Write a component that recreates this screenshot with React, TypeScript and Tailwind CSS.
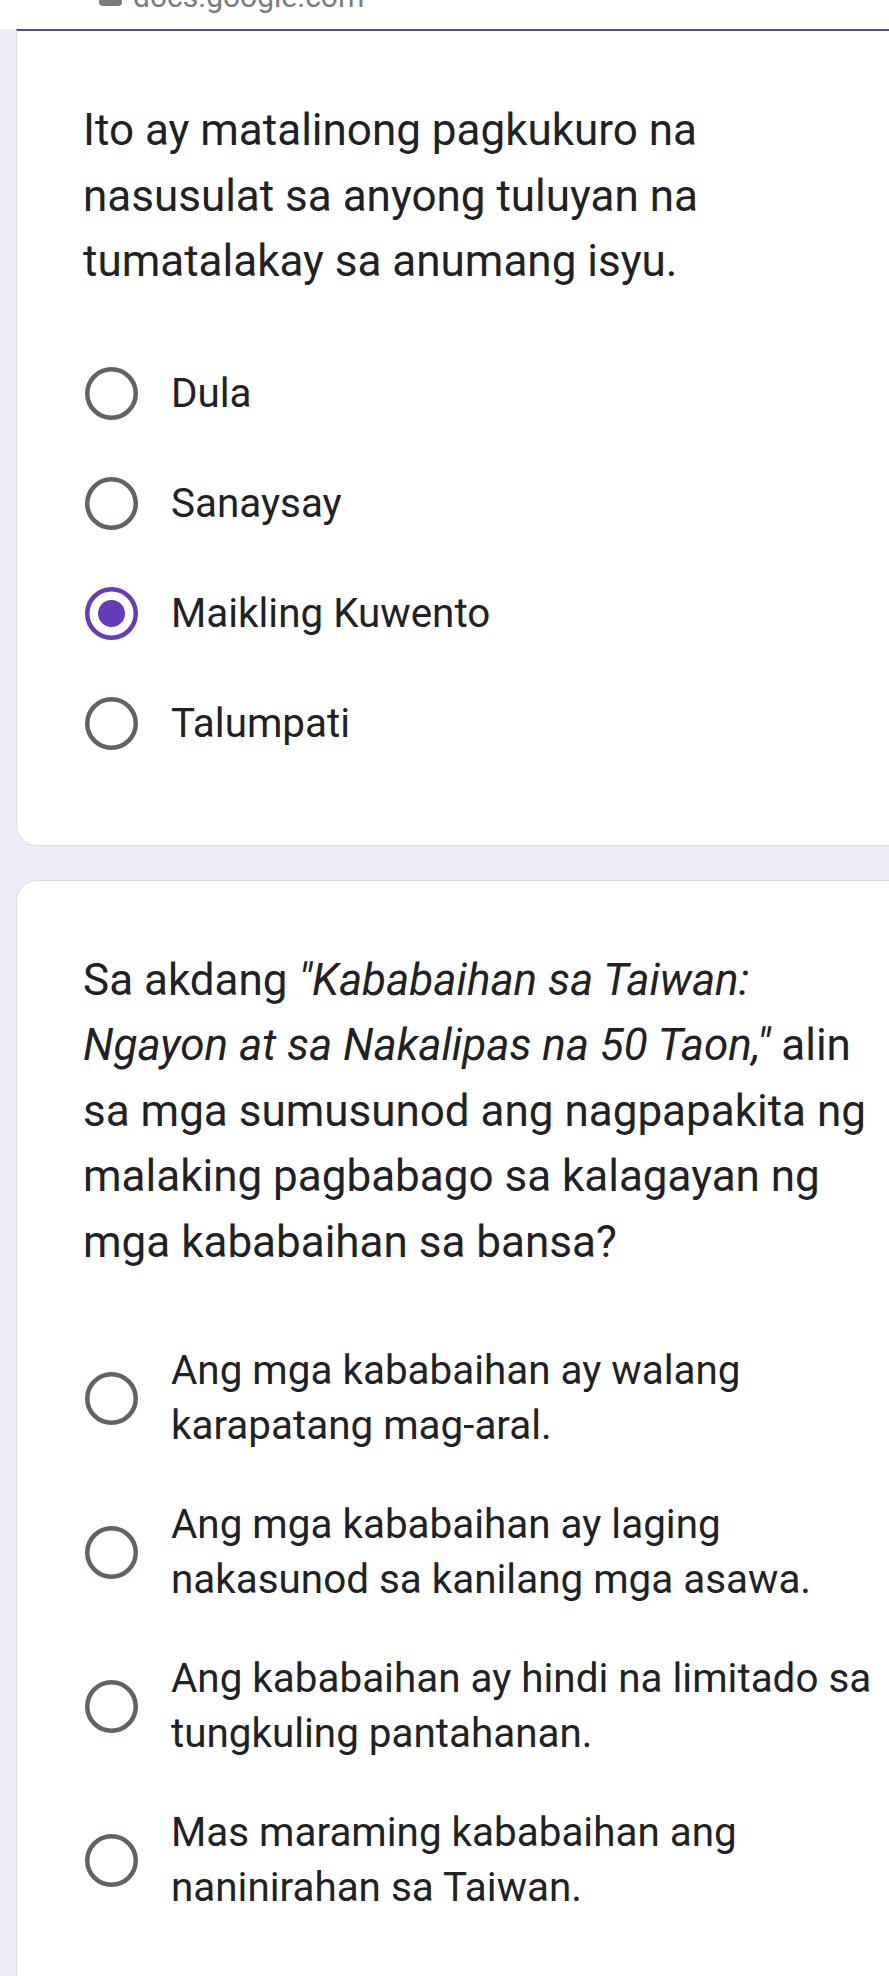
import React from "react";

const Radio = ({ checked = false }: { checked?: boolean }) => (
  <svg width="53" height="53" viewBox="0 0 53 53" className="shrink-0 ml-[2px]">
    <circle
      cx="26.5"
      cy="26.5"
      r="24.25"
      fill="none"
      stroke={checked ? "#673ab7" : "#5f6368"}
      strokeWidth="4.5"
    />
    {checked && <circle cx="26.5" cy="26.5" r="13.5" fill="#673ab7" />}
  </svg>
);

const SingleOption = ({ label, checked = false }: { label: string; checked?: boolean }) => (
  <div className="flex items-center h-[110px]">
    <Radio checked={checked} />
    <div className="ml-[33px] text-[40.4px] leading-[55px] text-[#202124] whitespace-nowrap">{label}</div>
  </div>
);

const DoubleOption = ({ lines }: { lines: [string, string] }) => (
  <div className="flex items-center h-[154px]">
    <Radio />
    <div className="ml-[33px] text-[40.4px] leading-[55px] text-[#202124] whitespace-nowrap">
      {lines[0]}
      <br />
      {lines[1]}
    </div>
  </div>
);

export default function App() {
  return (
    <div
      className="w-[889px] h-[1976px] overflow-hidden bg-[#f0ebf8]"
      style={{ fontFamily: "Roboto, 'Noto Sans', Arial, sans-serif" }}
    >
      {/* browser url strip (cut off at the top edge, as in the screenshot) */}
      <div className="h-[29px] bg-white overflow-hidden">
        <div className="flex items-end gap-[11px] pl-[99px] mt-[-18px] h-[30px]">
          <div className="w-[23px] h-[18px] rounded-[4px] bg-[#7b7b7b] mb-[6px]" />
          <div className="text-[30px] leading-[30px] text-[#7b7b7b]">docs.google.com</div>
        </div>
      </div>

      {/* card 1 */}
      <div className="ml-[16px] w-[900px] bg-white border-t-2 border-t-[#594a85] border-l border-b border-[#dadce0] rounded-bl-[21px] pl-[66px] pt-[67px] pb-[66px]">
        <div className="text-[44px] leading-[65.5px] text-[#202124] whitespace-nowrap">
          Ito ay matalinong pagkukuro na
          <br />
          nasusulat sa anyong tuluyan na
          <br />
          tumatalakay sa anumang isyu.
        </div>
        <div className="mt-[44px] flex flex-col">
          <SingleOption label="Dula" />
          <SingleOption label="Sanaysay" />
          <SingleOption label="Maikling Kuwento" checked />
          <SingleOption label="Talumpati" />
        </div>
      </div>

      {/* card 2 */}
      <div className="mt-[34px] ml-[16px] w-[900px] bg-white border-t border-l border-[#dadce0] rounded-tl-[21px] pl-[66px] pt-[67px] pb-[40px]">
        <div className="text-[44px] leading-[65.5px] text-[#202124] whitespace-nowrap">
          Sa akdang <span className="italic">"Kababaihan sa Taiwan:</span>
          <br />
          <span className="italic">Ngayon at sa Nakalipas na 50 Taon,"</span> alin
          <br />
          sa mga sumusunod ang nagpapakita ng
          <br />
          malaking pagbabago sa kalagayan ng
          <br />
          mga kababaihan sa bansa?
        </div>
        <div className="mt-[46px] flex flex-col">
          <DoubleOption lines={["Ang mga kababaihan ay walang", "karapatang mag-aral."]} />
          <DoubleOption lines={["Ang mga kababaihan ay laging", "nakasunod sa kanilang mga asawa."]} />
          <DoubleOption lines={["Ang kababaihan ay hindi na limitado sa", "tungkuling pantahanan."]} />
          <DoubleOption lines={["Mas maraming kababaihan ang", "naninirahan sa Taiwan."]} />
        </div>
      </div>
    </div>
  );
}
